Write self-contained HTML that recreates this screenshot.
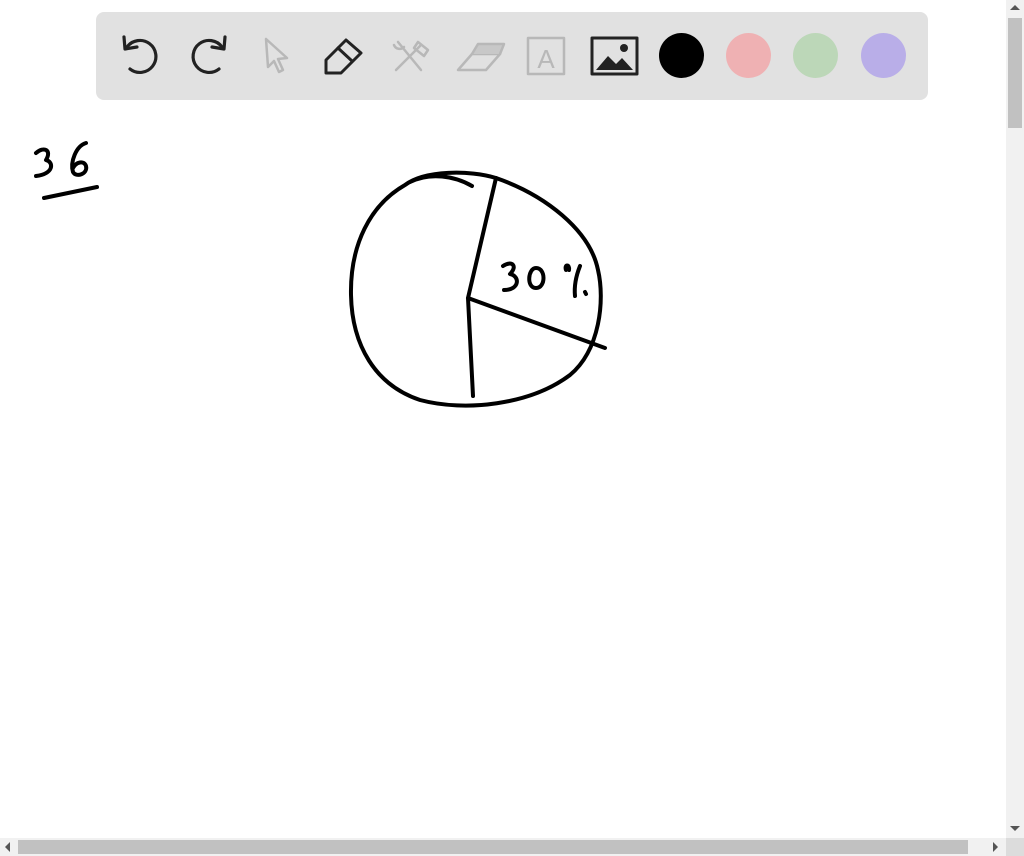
<!DOCTYPE html>
<html><head><style>
html,body{margin:0;padding:0;width:1024px;height:856px;overflow:hidden;background:#fff;font-family:"Liberation Sans",sans-serif}
.tb{position:absolute;left:96px;top:12px;width:832px;height:88px;background:#e1e1e1;border-radius:8px}
.c{position:absolute;width:45px;height:45px;border-radius:50%;top:33px}
</style></head><body>
<div class="tb"></div>
<svg width="1024" height="856" style="position:absolute;left:0;top:0" fill="none" stroke-linecap="round" stroke-linejoin="round">
<g stroke="#222" stroke-width="3.2">
<path d="M127 47 A16 16 0 1 1 130 69"/><path d="M124 37 L125 49 L137 47"/>
<path d="M222 47 A16 16 0 1 0 219 69"/><path d="M225 37 L224 49 L212 47"/>
</g>
<path d="M266 39 L268 67 L274 61 L279 72 L283 70 L278 59 L287 58 Z" stroke="#b8b8b8" stroke-width="2.5"/>
<g stroke="#222" stroke-width="3"><path d="M346 40 L361 53 L341 73 L326 73 L326 60 Z"/><path d="M338 48 L352 61"/></g>
<g stroke="#b8b8b8" stroke-width="2.5"><path d="M396 70 L420 46"/><path d="M398 42 L421 70"/><path d="M394 45 A6 6 0 0 0 404 47"/><path d="M418 42 L428 50 L424 56 L414 48 Z"/></g>
<g stroke="#b8b8b8" stroke-width="2.5"><path d="M458 70 L472 54 L500 54 L486 70 Z"/><path d="M472 54 L478 44 L504 44 L500 54" fill="#c8c8c8"/></g>
<rect x="528" y="38" width="36" height="36" stroke="#b8b8b8" stroke-width="2.5"/>
<text x="546" y="68" text-anchor="middle" font-family="Liberation Sans" font-size="26" fill="#b8b8b8" stroke="none">A</text>
<rect x="592" y="38" width="45" height="36" stroke="#222" stroke-width="3"/>
<path d="M596 70 L608 56 L616 64 L622 58 L633 70 Z" fill="#222" stroke="none"/>
<circle cx="624" cy="48" r="4" fill="#222" stroke="none"/>
<g stroke="#000" stroke-width="4">
<path d="M496 178 C470 170 425 170 405 185 C370 205 350 245 351 295 C352 345 375 385 420 400 C465 412 530 405 570 375 C600 350 605 300 598 270 C590 230 545 195 496 178"/>
<path d="M410 182 C430 172 455 176 472 186"/>
<path d="M496 178 L468 298 L473 396"/>
<path d="M468 298 L605 348"/>
<path d="M36 153 C44 146 52 150 46 160 C54 162 54 174 36 176"/>
<path d="M86 143 C76 146 70 162 73 172 C76 178 88 174 86 166 C84 160 76 162 73 168"/>
<path d="M44 198 L97 187"/>
<path d="M503 266 C512 260 518 266 510 274 C520 276 520 290 504 290"/>
<path d="M536 268 C528 268 526 288 536 288 C546 288 546 268 536 268"/>
<path d="M566 270 C564 264 570 264 569 270"/>
<path d="M580 266 C576 276 574 286 575 296"/>
<path d="M585 292 L586 294"/>
</g>
</svg>
<div class="c" style="left:659px;background:#000"></div>
<div class="c" style="left:726px;background:#efb1b3"></div>
<div class="c" style="left:793px;background:#bcd7b8"></div>
<div class="c" style="left:861px;background:#b9aee8"></div>
<div style="position:absolute;left:1006px;top:0;width:18px;height:838px;background:#f1f1f1"></div>
<div style="position:absolute;left:1008px;top:18px;width:14px;height:110px;background:#c1c1c1"></div>
<div style="position:absolute;left:0;top:838px;width:1024px;height:18px;background:#f1f1f1"></div>
<div style="position:absolute;left:18px;top:840px;width:950px;height:14px;background:#c1c1c1"></div>
<div style="position:absolute;left:1010px;top:5px;width:0;height:0;border:5px solid transparent;border-bottom-color:#555;border-top:0"></div>
<div style="position:absolute;left:1010px;top:826px;width:0;height:0;border:5px solid transparent;border-top-color:#555;border-bottom:0"></div>
<div style="position:absolute;left:5px;top:842px;width:0;height:0;border:5px solid transparent;border-right-color:#555;border-left:0"></div>
<div style="position:absolute;left:993px;top:842px;width:0;height:0;border:5px solid transparent;border-left-color:#555;border-right:0"></div>
<div style="position:absolute;left:1006px;top:838px;width:18px;height:18px;background:#dcdcdc"></div>
</body></html>
